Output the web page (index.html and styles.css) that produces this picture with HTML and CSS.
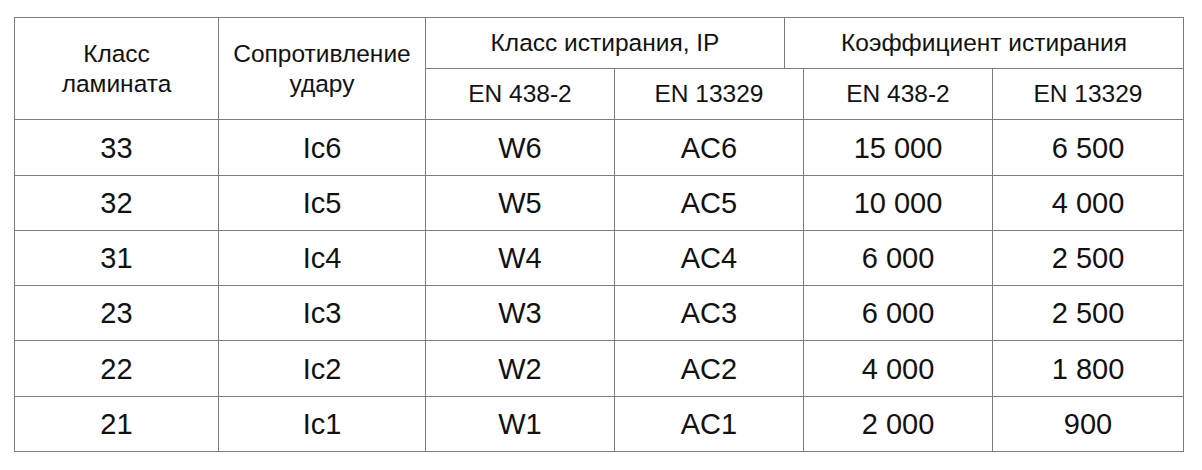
FILE: index.html
```html
<!DOCTYPE html>
<html lang="ru">
<head>
<meta charset="utf-8">
<title>Классы ламината</title>
<link rel="stylesheet" href="styles.css">
</head>
<body>
<table class="grid">
  <colgroup>
    <col class="c1"><col class="c2"><col class="c3"><col class="c4"><col class="c5"><col class="c6"><col class="c7">
  </colgroup>
  <thead>
    <tr class="h1">
      <th rowspan="2">Класс<br>ламината</th>
      <th rowspan="2">Сопротивление<br>удару</th>
      <th colspan="2">Класс истирания, IP</th>
      <th colspan="3">Коэффициент истирания</th>
    </tr>
    <tr class="h2">
      <th>EN 438-2</th>
      <th colspan="2">EN 13329</th>
      <th>EN 438-2</th>
      <th>EN 13329</th>
    </tr>
  </thead>
  <tbody>
    <tr class="r56"><td>33</td><td>Ic6</td><td>W6</td><td colspan="2">AC6</td><td>15 000</td><td>6 500</td></tr>
    <tr class="r55"><td>32</td><td>Ic5</td><td>W5</td><td colspan="2">AC5</td><td>10 000</td><td>4 000</td></tr>
    <tr class="r55"><td>31</td><td>Ic4</td><td>W4</td><td colspan="2">AC4</td><td>6 000</td><td>2 500</td></tr>
    <tr class="r55"><td>23</td><td>Ic3</td><td>W3</td><td colspan="2">AC3</td><td>6 000</td><td>2 500</td></tr>
    <tr class="r56"><td>22</td><td>Ic2</td><td>W2</td><td colspan="2">AC2</td><td>4 000</td><td>1 800</td></tr>
    <tr class="r55"><td>21</td><td>Ic1</td><td>W1</td><td colspan="2">AC1</td><td>2 000</td><td>900</td></tr>
  </tbody>
</table>
</body>
</html>
```
FILE: styles.css
```css
html, body {
  margin: 0;
  padding: 0;
  background: #ffffff;
}
body {
  padding: 17px 0 0 14px;
  font-family: "Liberation Sans", Arial, sans-serif;
  color: #111111;
}
.grid {
  border-collapse: collapse;
  table-layout: fixed;
  width: 1169px;
}
.c1 { width: 204px; }
.c2 { width: 207px; }
.c3 { width: 189px; }
.c4 { width: 170px; }
.c5 { width: 19px; }
.c6 { width: 189px; }
.c7 { width: 191px; }
.grid th,
.grid td {
  border: 1px solid #7c7c7c;
  padding: 0;
  text-align: center;
  vertical-align: middle;
  font-weight: normal;
}
.grid th {
  font-size: 24.5px;
  line-height: 30px;
}
.grid td {
  font-size: 29px;
  line-height: 32px;
}
.h1, .h2 { height: 51px; }
.r56 { height: 56px; }
.r55 { height: 55px; }
```
